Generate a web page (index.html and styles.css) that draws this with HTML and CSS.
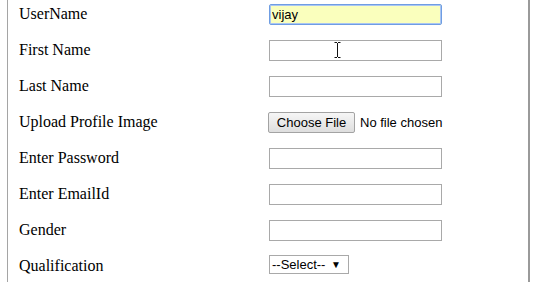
FILE: index.html
```html
<!DOCTYPE html>
<html lang="en">
<head>
  <meta charset="UTF-8">
  <title>Register</title>
  <link rel="stylesheet" href="styles.css">
</head>
<body>
  <div class="reg-panel">
    <form class="reg-form">
      <label class="reg-label" for="reg-user">UserName</label>
      <div class="reg-field"><input id="reg-user" class="reg-input reg-input-focus" type="text" value="vijay"></div>

      <label class="reg-label" for="reg-first">First Name</label>
      <div class="reg-field reg-field-cursor">
        <input id="reg-first" class="reg-input" type="text">
        <!-- mouse I-beam from the screenshot -->
        <svg class="reg-cursor" width="7" height="16" viewBox="0 0 7 16">
          <path d="M0.5 0.5h2.5M4 0.5h2.5M3.5 1v14M0.5 15.5h2.5M4 15.5h2.5" stroke="#111" stroke-width="1" fill="none"/>
        </svg>
      </div>

      <label class="reg-label" for="reg-last">Last Name</label>
      <div class="reg-field"><input id="reg-last" class="reg-input" type="text"></div>

      <label class="reg-label">Upload Profile Image</label>
      <div class="reg-field reg-file">
        <button type="button" class="reg-file-btn">Choose File</button>
        <span class="reg-file-name">No file chosen</span>
      </div>

      <label class="reg-label" for="reg-pass">Enter Password</label>
      <div class="reg-field"><input id="reg-pass" class="reg-input" type="password"></div>

      <label class="reg-label" for="reg-mail">Enter EmailId</label>
      <div class="reg-field"><input id="reg-mail" class="reg-input" type="text"></div>

      <label class="reg-label" for="reg-gender">Gender</label>
      <div class="reg-field"><input id="reg-gender" class="reg-input" type="text"></div>

      <label class="reg-label">Qualification</label>
      <div class="reg-field">
        <div class="reg-select">
          <span>--Select--</span>
          <span class="reg-select-arrow">&#9660;</span>
        </div>
      </div>
    </form>
  </div>
</body>
</html>
```

FILE: styles.css
```css
body { margin: 0; background: #fff; }
.reg-panel {
  margin-left: 7px;
  width: 523px;
  min-height: 282px;
  box-sizing: border-box;
  border-left: 1px solid #a5a5a5;
  border-right: 2px solid #9a9a9a;
  padding: 4px 0 0 11px;
}
.reg-form {
  display: grid;
  grid-template-columns: 250px 1fr;
  grid-auto-rows: 21px;
  row-gap: 15px;
}
.reg-label {
  font-family: "Liberation Serif", "Times New Roman", serif;
  font-size: 16px;
  line-height: 19px;
  color: #000;
}
.reg-field {
  display: flex;
  align-items: flex-start;
  position: relative;
}
.reg-input {
  width: 173px;
  height: 21px;
  box-sizing: border-box;
  border: 1px solid #a9a9a9;
  border-radius: 0;
  padding: 1px 2px;
  margin: 0;
  font-family: "Liberation Sans", Arial, sans-serif;
  font-size: 13px;
  color: #000;
  background: #fff;
  outline: none;
}
.reg-input-focus {
  background: #faffbd;
  border: 1px solid #6f9de3;
  border-radius: 2px;
  box-shadow: inset 0 0 0 1px #a9c6f2;
}
.reg-cursor {
  position: absolute;
  left: 65px;
  top: 2px;
}
.reg-file {
  align-items: center;
  margin-left: -1px;
}
.reg-file-btn {
  height: 21px;
  width: 87px;
  box-sizing: border-box;
  padding: 0;
  margin: 0;
  border: 1px solid #a3a3a3;
  border-radius: 2px;
  background: linear-gradient(#f6f6f6, #dedede);
  font-family: "Liberation Sans", Arial, sans-serif;
  font-size: 13px;
  color: #000;
}
.reg-file-name {
  margin-left: 5px;
  font-family: "Liberation Sans", Arial, sans-serif;
  font-size: 13px;
  color: #000;
}
.reg-select {
  display: flex;
  align-items: center;
  justify-content: space-between;
  width: 80px;
  height: 19px;
  margin-top: -1px;
  box-sizing: border-box;
  border: 1px solid #a9a9a9;
  padding: 0 7px 0 2px;
  font-family: "Liberation Sans", Arial, sans-serif;
  font-size: 13px;
  color: #000;
}
.reg-select-arrow { font-size: 10px; }
```
